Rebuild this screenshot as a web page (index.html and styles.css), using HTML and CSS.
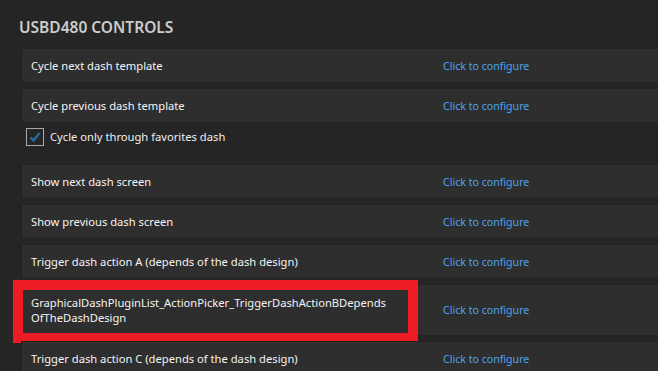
FILE: index.html
```html
<!DOCTYPE html>
<html lang="en">
<head>
    <meta charset="UTF-8" />
    <title>USBD480 Controls</title>
    <link rel="stylesheet" href="styles.css">
</head>
<body>

    <div class="section-title">USBD480 CONTROLS</div>

    <div class="action-list">
        <div class="action-row">
            <div class="action-label">Cycle next dash template</div>
            <div class="action-link">Click to configure</div>
        </div>
        <div class="action-row">
            <div class="action-label">Cycle previous dash template</div>
            <div class="action-link">Click to configure</div>
        </div>

        <label class="check-row">
            <span class="check-box">
                <svg width="14" height="14" viewBox="0 0 14 14">
                    <path d="M2.5 7.5 L5.5 10.5 L11.5 3" fill="none" stroke="#1f6ea6" stroke-width="2.4"/>
                </svg>
            </span>
            <span>Cycle only through favorites dash</span>
        </label>

        <div class="action-row">
            <div class="action-label">Show next dash screen</div>
            <div class="action-link">Click to configure</div>
        </div>
        <div class="action-row">
            <div class="action-label">Show previous dash screen</div>
            <div class="action-link">Click to configure</div>
        </div>
        <div class="action-row">
            <div class="action-label">Trigger dash action A (depends of the dash design)</div>
            <div class="action-link">Click to configure</div>
        </div>
        <div class="action-row tall">
            <div class="action-label">GraphicalDashPluginList_ActionPicker_TriggerDashActionBDepends<wbr>OfTheDashDesign</div>
            <div class="action-link">Click to configure</div>
            <!-- annotation frame -->
            <div class="highlight"></div>
        </div>
        <div class="action-row">
            <div class="action-label">Trigger dash action C (depends of the dash design)</div>
            <div class="action-link">Click to configure</div>
        </div>
    </div>

</body>
</html>
```

FILE: styles.css
```css
body {
    margin: 0;
    background: #252525;
    color: #f0f0f0;
    font-family: 'Noto Sans', 'Open Sans', sans-serif;
    overflow: hidden;
    height: 371px;
}

.section-title {
    font-size: 15.5px;
    font-weight: 600;
    color: #cccccc;
    padding: 16px 0 0 19px;
    height: 32px;
}

.action-list {
    display: flex;
    flex-direction: column;
    gap: 5px;
    padding-left: 21px;
}

.action-row {
    position: relative;
    display: flex;
    align-items: center;
    height: 33px;
    background: #2e2e2e;
    border: 1px solid #222222;
    border-right: none;
    font-size: 11.2px;
}

.action-row.tall {
    height: 50px;
}

.action-label {
    width: 403px;
    padding-left: 9px;
    line-height: 15px;
    color: #f4f4f4;
}

.action-link {
    padding-left: 9px;
    color: #4fa3ea;
    font-size: 10.6px;
    cursor: pointer;
}

.check-row {
    display: flex;
    align-items: flex-start;
    gap: 6px;
    height: 31px;
    padding-left: 5px;
    font-size: 11.2px;
    line-height: 18px;
}

.check-box {
    width: 16px;
    height: 16px;
    border: 1px solid #a8a8a8;
    display: flex;
    align-items: center;
    justify-content: center;
}

.highlight {
    position: absolute;
    left: -9px;
    top: -5px;
    width: 385px;
    height: 43px;
    border: 10px solid #ec1c24;
    pointer-events: none;
}
```
